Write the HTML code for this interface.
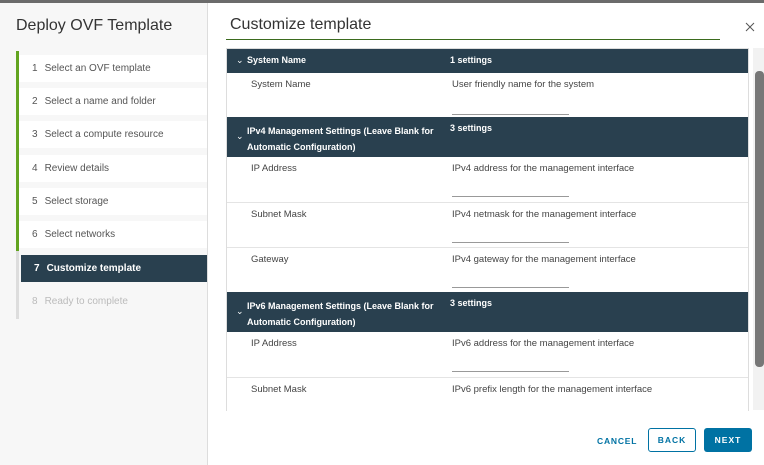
<!DOCTYPE html>
<html><head><style>
*{margin:0;padding:0;box-sizing:border-box}
body{width:764px;height:465px;overflow:hidden;background:#fff;font-family:"Liberation Sans",sans-serif;position:relative;color:#333}
.abs{position:absolute}
#top{left:0;top:0;width:764px;height:3px;background:#6b6b6b}
#left{left:0;top:3px;width:208px;height:462px;background:#f7f7f7;border-right:1px solid #ddd}
.step{position:absolute;left:19px;width:188px;height:27px;background:#fff;font-size:10px;line-height:27px;padding-left:13px;color:#555}
.step b{font-weight:normal;margin-right:7px}
.hdr{position:absolute;left:227px;width:521px;background:#29404f;color:#fff;font-size:9px;font-weight:bold}
.row{position:absolute;left:227px;width:521px;border-bottom:1px solid #e4e4e4;font-size:9.5px;color:#444}
.row .l{position:absolute;left:24px;top:6px}
.row .d{position:absolute;left:225px;top:6px}
.row .u{position:absolute;left:225px;top:39px;width:117px;height:1px;background:#999}
.chev{position:absolute;left:9px;font-size:9px;font-weight:normal}
</style></head><body>
<div class="abs" id="top"></div>
<div class="abs" id="left"></div>
<div class="abs" style="left:16px;top:17px;font-size:16px;color:#333">Deploy OVF Template</div>
<div class="abs" style="left:16px;top:51px;width:3px;height:200px;background:#62a420"></div>
<div class="abs" style="left:16px;top:251px;width:3px;height:68px;background:#ddd"></div>
<div class="step" style="top:55px"><b>1</b>Select an OVF template</div>
<div class="step" style="top:88px"><b>2</b>Select a name and folder</div>
<div class="step" style="top:121px"><b>3</b>Select a compute resource</div>
<div class="step" style="top:155px"><b>4</b>Review details</div>
<div class="step" style="top:188px"><b>5</b>Select storage</div>
<div class="step" style="top:221px"><b>6</b>Select networks</div>
<div class="step" style="top:255px;left:21px;width:186px;background:#29404f;color:#fff;font-weight:bold"><b style="font-weight:bold">7</b>Customize template</div>
<div class="step" style="top:288px;background:transparent;color:#bbb"><b>8</b>Ready to complete</div>

<div class="abs" style="left:230px;top:16px;font-size:16px;color:#333">Customize template</div>
<div class="abs" style="left:226px;top:39px;width:494px;height:1px;background:#3b6b1e"></div>
<svg class="abs" style="left:745px;top:22px" width="10" height="10" viewBox="0 0 10 10"><path d="M1 1L9 9M9 1L1 9" stroke="#555" stroke-width="1"/></svg>
<div class="abs" style="left:226px;top:48px;width:523px;height:363px;border:1px solid #ddd;border-bottom:none"></div>
<div class="abs" style="left:753px;top:48px;width:11px;height:362px;background:#f2f2f2"></div>
<div class="abs" style="left:755px;top:71px;width:9px;height:296px;background:#777;border-radius:4px"></div>

<div class="hdr" style="top:49px;height:24px"><span class="chev" style="top:6px">⌄</span><span class="abs" style="left:20px;top:6px">System Name</span><span class="abs" style="left:223px;top:6px">1 settings</span></div>
<div class="row" style="top:73px;height:44px;border:none"><span class="l">System Name</span><span class="d">User friendly name for the system</span><div class="u" style="top:41px"></div></div>
<div class="hdr" style="top:117px;height:40px"><span class="chev" style="top:14px">⌄</span><span class="abs" style="left:20px;top:6px;line-height:16px">IPv4 Management Settings (Leave Blank for<br>Automatic Configuration)</span><span class="abs" style="left:223px;top:6px">3 settings</span></div>
<div class="row" style="top:157px;height:46px"><span class="l">IP Address</span><span class="d">IPv4 address for the management interface</span><div class="u"></div></div>
<div class="row" style="top:203px;height:45px"><span class="l">Subnet Mask</span><span class="d">IPv4 netmask for the management interface</span><div class="u"></div></div>
<div class="row" style="top:248px;height:44px;border:none"><span class="l">Gateway</span><span class="d">IPv4 gateway for the management interface</span><div class="u"></div></div>
<div class="hdr" style="top:292px;height:40px"><span class="chev" style="top:14px">⌄</span><span class="abs" style="left:20px;top:6px;line-height:16px">IPv6 Management Settings (Leave Blank for<br>Automatic Configuration)</span><span class="abs" style="left:223px;top:6px">3 settings</span></div>
<div class="row" style="top:332px;height:46px"><span class="l">IP Address</span><span class="d">IPv6 address for the management interface</span><div class="u"></div></div>
<div class="row" style="top:378px;height:32px;border:none"><span class="l">Subnet Mask</span><span class="d">IPv6 prefix length for the management interface</span></div>

<div class="abs" style="left:597px;top:436px;font-size:8.5px;font-weight:bold;letter-spacing:0.8px;color:#0072a3">CANCEL</div>
<div class="abs" style="left:648px;top:428px;width:48px;height:24px;border:1px solid #0072a3;border-radius:3px;font-size:8.5px;font-weight:bold;letter-spacing:1px;color:#0072a3;text-align:center;line-height:22px">BACK</div>
<div class="abs" style="left:704px;top:428px;width:48px;height:24px;background:#0072a3;border-radius:3px;font-size:8.5px;font-weight:bold;letter-spacing:1px;color:#fff;text-align:center;line-height:24px">NEXT</div>
</body></html>
